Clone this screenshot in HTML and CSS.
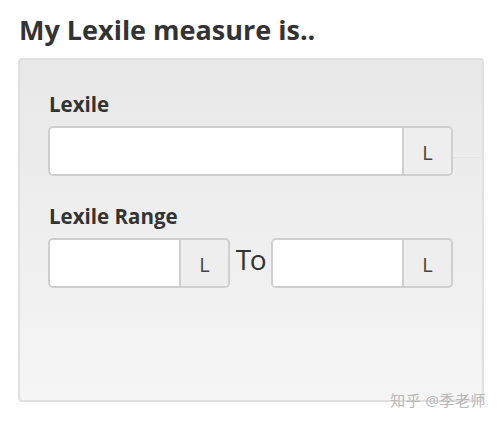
FILE: index.html
```
<!DOCTYPE html>
<html>
<head>
<meta charset="utf-8">
<link rel="stylesheet" href="styles.css">
</head>
<body>
<div class="page">
  <h1 class="title">My Lexile measure is..</h1>
  <div class="panel">
    <div class="label">Lexile</div>
    <div class="row">
      <div class="group wide">
        <div class="field"></div>
        <div class="addon">L</div>
      </div>
      <div class="stray"></div>
    </div>
    <div class="label label2">Lexile Range</div>
    <div class="row">
      <div class="group half">
        <div class="field"></div>
        <div class="addon">L</div>
      </div>
      <div class="to">To</div>
      <div class="group half">
        <div class="field"></div>
        <div class="addon">L</div>
      </div>
    </div>
    <div class="watermark">知乎 @季老师</div>
  </div>
</div>
</body>
</html>
```
FILE: styles.css
```
html, body {
  margin: 0;
  padding: 0;
  background: #fff;
}
.page {
  padding: 12px 13px 19px 18px;
  font-family: "Open Sans", "Noto Sans CJK SC", sans-serif;
  color: #333;
}
.title {
  margin: 0 0 10px 1px;
  font-size: 27px;
  line-height: 36px;
  font-weight: 700;
  color: #333;
}
.panel {
  position: relative;
  box-sizing: border-box;
  width: 466px;
  height: 344px;
  border: 2px solid #e0e0e0;
  border-radius: 4px;
  background: linear-gradient(#e8e8e8, #f5f5f5);
  padding: 30px 0 0 28px;
}
.label {
  font-size: 20.5px;
  font-weight: 700;
  line-height: 28px;
  color: #333;
  margin-bottom: 8px;
  margin-left: 1px;
}
.label2 {
  margin-top: 26px;
}
.row {
  display: flex;
  align-items: center;
}
.group {
  display: flex;
  box-sizing: border-box;
  height: 50px;
  border: 2px solid #cfcfcf;
  border-radius: 5px;
  overflow: hidden;
}
.wide { width: 405px; }
.half { width: 182px; }
.field {
  flex: 1;
  background: #fff;
}
.addon {
  width: 49px;
  border-left: 2px solid #cfcfcf;
  background: #eeeeee;
  display: flex;
  align-items: center;
  justify-content: center;
  font-size: 20px;
  color: #444;
  padding-top: 2px;
  box-sizing: border-box;
}
.stray {
  width: 27px;
  height: 1px;
  background: #e2e2e2;
  margin-top: 13px;
}
.to {
  font-size: 28px;
  letter-spacing: -1.5px;
  color: #333;
  width: 41px;
  text-align: center;
  margin-top: -9px;
}
.watermark {
  position: absolute;
  right: -4px;
  bottom: -10px;
  font-size: 15px;
  color: #b8b8b8;
  letter-spacing: 0.5px;
}
```
